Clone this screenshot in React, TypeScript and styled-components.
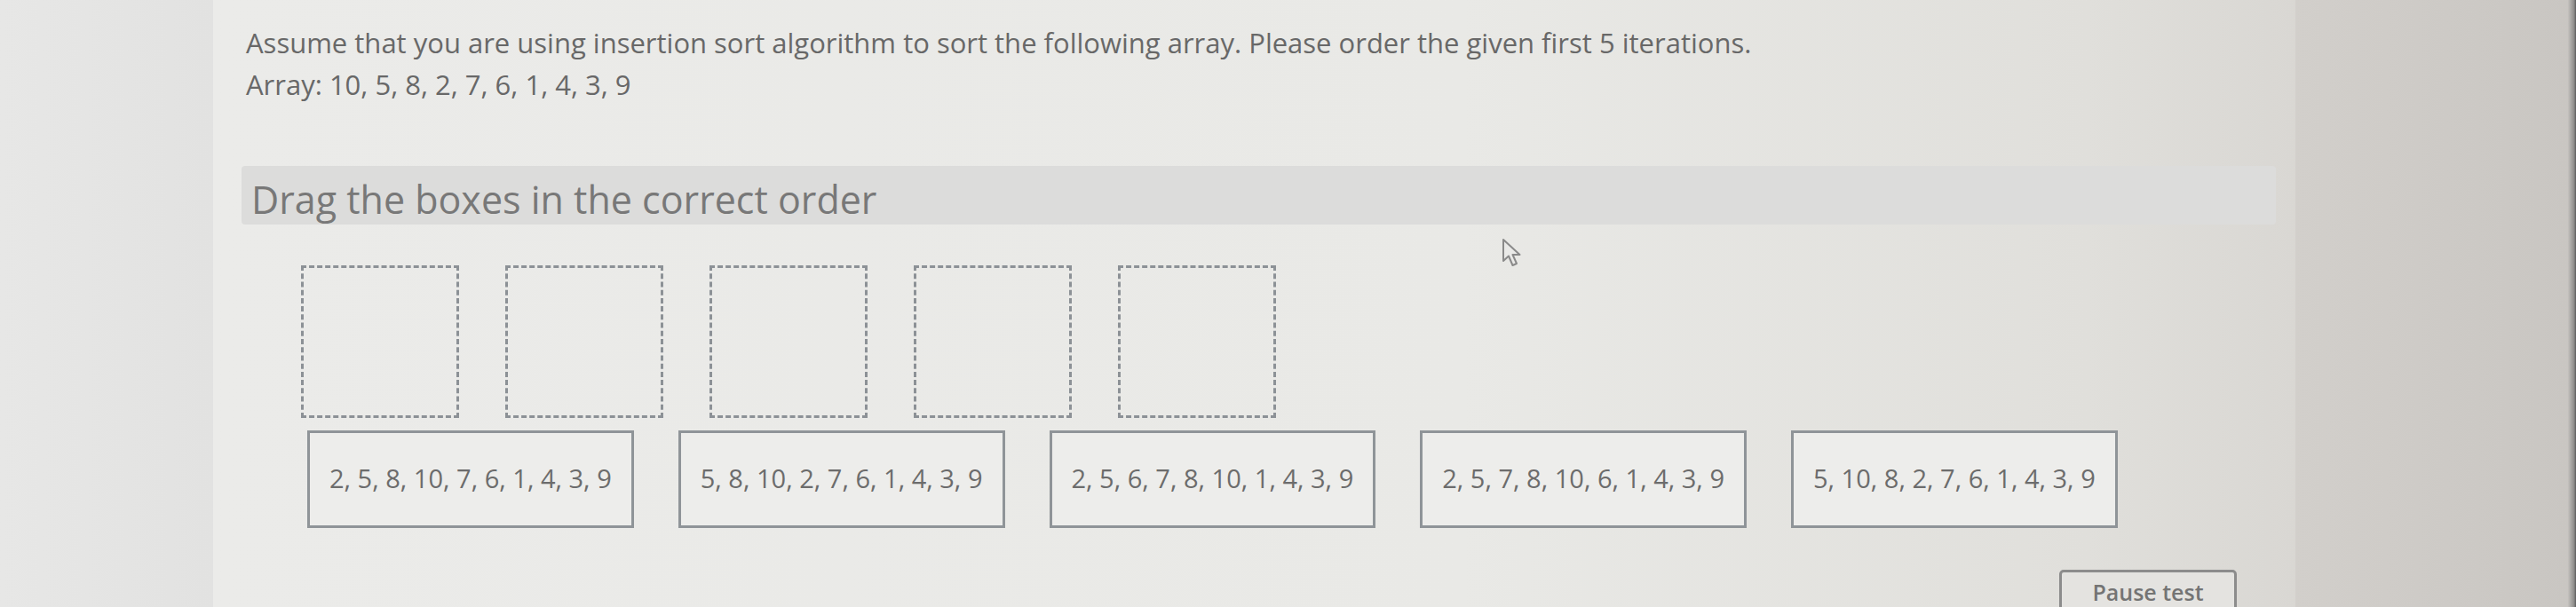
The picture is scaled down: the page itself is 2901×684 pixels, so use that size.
import React from 'react';
import styled, { createGlobalStyle } from 'styled-components';

const GlobalStyle = createGlobalStyle`
  html, body {
    margin: 0;
    padding: 0;
    height: 684px;
    overflow: hidden;
    background: #e3e3e2;
    font-family: "Open Sans", "Noto Sans", sans-serif;
  }
`;

const Screen = styled.div`
  display: flex;
  height: 684px;
  width: 2901px;
  position: relative;
`;

const LeftGutter = styled.div`
  flex: 0 0 240px;
  background: linear-gradient(90deg, #e7e7e6 0%, #e2e2e1 100%);
`;

const RightGutter = styled.div`
  flex: 1;
  background: linear-gradient(90deg, #d2cfcb 0%, #c9c6c2 97%, #8d8c8a 99.3%, #5a5a5a 100%);
`;

const Panel = styled.main`
  flex: 0 0 2345px;
  box-sizing: border-box;
  padding: 25px 22px 0 32px;
  background: linear-gradient(90deg, #ebebe9 0%, #e9e9e6 60%, #e0dfdb 90%, #d9d7d3 100%);
  display: flex;
  flex-direction: column;
`;

const Question = styled.div`
  padding-left: 5px;
  font-size: 31px;
  line-height: 47px;
  color: #686868;
`;

const Instruction = styled.h2`
  margin: 68px 0 0;
  height: 66px;
  box-sizing: border-box;
  padding: 10px 0 0 11px;
  background: #dcdcdb;
  border-radius: 4px;
  font-size: 43px;
  line-height: 56px;
  font-weight: 400;
  color: #787878;
`;

const SlotRow = styled.div`
  display: flex;
  gap: 52px;
  margin-top: 46px;
  padding-left: 67px;
`;

const Slot = styled.div`
  width: 178px;
  height: 172px;
  box-sizing: border-box;
  border: 3px dashed #8c9196;
`;

const ChoiceRow = styled.div`
  display: flex;
  gap: 50px;
  margin-top: 14px;
  padding-left: 74px;
`;

const Choice = styled.div`
  height: 110px;
  box-sizing: border-box;
  display: flex;
  align-items: center;
  padding: 0 22px 4px;
  border: 3px solid #8f9498;
  background: #ededeb;
  font-size: 29px;
  color: #6c6c6c;
  white-space: nowrap;
`;

const Footer = styled.div`
  display: flex;
  justify-content: flex-end;
  margin-top: 47px;
  padding-right: 44px;
`;

const PauseButton = styled.button`
  width: 200px;
  height: 64px;
  box-sizing: border-box;
  border: 3px solid #8c8c8c;
  border-radius: 5px;
  background: #e4e3e0;
  font-family: "Open Sans", sans-serif;
  font-size: 25px;
  font-weight: 600;
  color: #747474;
  padding: 0 0 14px;
`;

const Pointer = styled.svg`
  position: absolute;
  left: 1691px;
  top: 268px;
  width: 24px;
  height: 34px;
`;

const slots = [0, 1, 2, 3, 4];

const choices = [
  '2, 5, 8, 10, 7, 6, 1, 4, 3, 9',
  '5, 8, 10, 2, 7, 6, 1, 4, 3, 9',
  '2, 5, 6, 7, 8, 10, 1, 4, 3, 9',
  '2, 5, 7, 8, 10, 6, 1, 4, 3, 9',
  '5, 10, 8, 2, 7, 6, 1, 4, 3, 9',
];

const App: React.FC = () => {
  return (
    <>
      <GlobalStyle />
      <Screen>
        <LeftGutter />
        <Panel>
          <Question>
            Assume that you are using insertion sort algorithm to sort the following array. Please order the given first 5 iterations.
            <br />
            Array: 10, 5, 8, 2, 7, 6, 1, 4, 3, 9
          </Question>

          <Instruction>Drag the boxes in the correct order</Instruction>

          <SlotRow>
            {slots.map((s) => (
              <Slot key={s} />
            ))}
          </SlotRow>

          <ChoiceRow>
            {choices.map((c) => (
              <Choice key={c}>{c}</Choice>
            ))}
          </ChoiceRow>

          <Footer>
            <PauseButton>Pause test</PauseButton>
          </Footer>
        </Panel>
        <RightGutter />

        {/* mouse pointer left on the page */}
        <Pointer viewBox="0 0 24 34">
          <path
            d="M2 2 L2 26 L8 20.5 L12.5 31 L17 29 L12.5 19 L20.5 19 Z"
            fill="#eaeae8"
            stroke="#8a8a8a"
            strokeWidth="2"
            strokeLinejoin="round"
          />
        </Pointer>
      </Screen>
    </>
  );
};

export default App;
